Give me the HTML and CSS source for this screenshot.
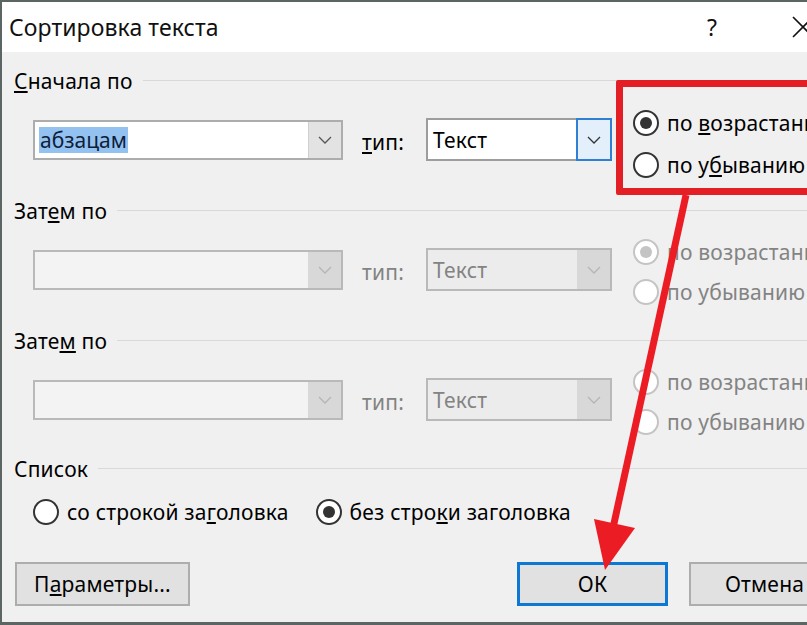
FILE: index.html
```html
<!DOCTYPE html>
<html lang="ru">
<head>
<meta charset="utf-8">
<title>Сортировка текста</title>
<link rel="stylesheet" href="styles.css">
</head>
<body>
<div class="dialog">
  <div class="titlebar">
    <span class="title">Сортировка текста</span>
    <span class="help">?</span>
    <span class="close"><svg width="30" height="24" viewBox="0 0 30 24"><path d="M1 2 L21 22 M21 2 L1 22" stroke="#111" stroke-width="1.6" fill="none"/></svg></span>
  </div>
  <div class="content">
    <div class="group first">
      <div class="ghead"><span class="glabel"><u>С</u>начала по</span><span class="gline"></span></div>
      <div class="grow">
        <div class="combo">
          <div class="field"><span class="sel">абзацам</span></div>
          <div class="drop"><svg width="14" height="8" viewBox="0 0 14 8"><path d="M1 1 L7 7 L13 1" stroke="#555" stroke-width="1.3" fill="none"/></svg></div>
        </div>
        <span class="tlabel"><u>т</u>ип:</span>
        <div class="tcombo">
          <div class="field">Текст</div>
          <div class="drop hot"><svg width="14" height="8" viewBox="0 0 14 8"><path d="M1 1 L7 7 L13 1" stroke="#333" stroke-width="1.3" fill="none"/></svg></div>
        </div>
        <div class="radios">
          <label class="radio"><span class="dot on"></span><span class="rtext">по <u>в</u>озрастанию</span></label>
          <label class="radio"><span class="dot"></span><span class="rtext">по у<u>б</u>ыванию</span></label>
        </div>
      </div>
    </div>

    <div class="group off">
      <div class="ghead"><span class="glabel">Зат<u>е</u>м по</span><span class="gline"></span></div>
      <div class="grow">
        <div class="combo">
          <div class="field"></div>
          <div class="drop"><svg width="14" height="8" viewBox="0 0 14 8"><path d="M1 1 L7 7 L13 1" stroke="#b5b5b5" stroke-width="1.3" fill="none"/></svg></div>
        </div>
        <span class="tlabel">тип:</span>
        <div class="tcombo">
          <div class="field">Текст</div>
          <div class="drop"><svg width="14" height="8" viewBox="0 0 14 8"><path d="M1 1 L7 7 L13 1" stroke="#b5b5b5" stroke-width="1.3" fill="none"/></svg></div>
        </div>
        <div class="radios">
          <label class="radio"><span class="dot on"></span><span class="rtext">по возрастанию</span></label>
          <label class="radio"><span class="dot"></span><span class="rtext">по убыванию</span></label>
        </div>
      </div>
    </div>

    <div class="group off">
      <div class="ghead"><span class="glabel">Зате<u>м</u> по</span><span class="gline"></span></div>
      <div class="grow">
        <div class="combo">
          <div class="field"></div>
          <div class="drop"><svg width="14" height="8" viewBox="0 0 14 8"><path d="M1 1 L7 7 L13 1" stroke="#b5b5b5" stroke-width="1.3" fill="none"/></svg></div>
        </div>
        <span class="tlabel">тип:</span>
        <div class="tcombo">
          <div class="field">Текст</div>
          <div class="drop"><svg width="14" height="8" viewBox="0 0 14 8"><path d="M1 1 L7 7 L13 1" stroke="#b5b5b5" stroke-width="1.3" fill="none"/></svg></div>
        </div>
        <div class="radios">
          <label class="radio"><span class="dot"></span><span class="rtext">по возрастанию</span></label>
          <label class="radio"><span class="dot"></span><span class="rtext">по убыванию</span></label>
        </div>
      </div>
    </div>

    <div class="group list">
      <div class="ghead"><span class="glabel">Список</span><span class="gline"></span></div>
      <div class="lrow">
        <label class="radio"><span class="dot"></span><span class="rtext">со строкой за<u>г</u>оловка</span></label>
        <label class="radio second"><span class="dot on"></span><span class="rtext">без стро<u>к</u>и заголовка</span></label>
      </div>
    </div>

    <div class="buttons">
      <button class="btn params">П<u>а</u>раметры...</button>
      <button class="btn ok">ОК</button>
      <button class="btn cancel">Отмена</button>
    </div>
  </div>
</div>

<div class="highlight"></div>
<svg class="arrow" width="807" height="625" viewBox="0 0 807 625">
  <line x1="686" y1="195" x2="613" y2="528" stroke="#ec1c24" stroke-width="7"/>
  <polygon points="594,519 635,528 605,570" fill="#ec1c24"/>
</svg>
</body>
</html>
```
FILE: styles.css
```css
html, body {
  margin: 0;
  padding: 0;
}
body {
  width: 807px;
  height: 625px;
  overflow: hidden;
  position: relative;
  background: #5b6664;
  font-family: "Noto Sans", "Open Sans", sans-serif;
  font-size: 21px;
  letter-spacing: 0.2px;
  color: #000;
}
.dialog {
  width: 880px;
  height: 620px;
  margin-top: 2px;
  margin-left: 2px;
  background: #f0f0f0;
  display: flex;
  flex-direction: column;
}
.titlebar {
  height: 50px;
  flex: none;
  background: #fff;
  display: flex;
  align-items: center;
}
.title {
  font-size: 23px;
  letter-spacing: 0.1px;
  margin-left: 7px;
  color: #111;
}
.help {
  margin-left: auto;
  font-size: 23px;
  width: 20px;
  text-align: center;
  color: #111;
}
.close {
  margin-left: 70px;
  width: 90px;
  display: flex;
  align-items: center;
}
.content {
  padding-left: 12px;
  padding-top: 15px;
  display: flex;
  flex-direction: column;
}
.ghead {
  height: 28px;
  display: flex;
  align-items: center;
}
.glabel {
  line-height: 28px;
  margin-right: 10px;
  white-space: nowrap;
}
.gline {
  flex: 1;
  height: 1px;
  background: #d9d9d9;
  margin-top: -2px;
}
.group + .group {
  margin-top: 15px;
}
.group.first + .group {
  margin-top: 11px;
}
.group.list {
  margin-top: 13px;
}
.grow {
  display: flex;
  align-items: flex-start;
  margin-top: 7px;
  height: 80px;
}
.first .grow {
  height: 84px;
}
.combo {
  margin-left: 19px;
  margin-top: 18px;
  width: 310px;
  height: 40px;
  box-sizing: border-box;
  border: 2px solid #adadad;
  background: #fff;
  display: flex;
  flex: none;
}
.combo .field {
  flex: 1;
  display: flex;
  align-items: center;
  padding-left: 4px;
}
.sel {
  background: #93c2f0;
  color: #0f1d3a;
  line-height: 26px;
  padding: 0 1px;
  letter-spacing: 0;
}
.drop {
  width: 32px;
  flex: none;
  background: #e3e3e3;
  border-left: 1px solid #cfcfcf;
  display: flex;
  align-items: center;
  justify-content: center;
}
.tlabel {
  margin-left: 19px;
  width: 64px;
  margin-top: 26px;
  line-height: 28px;
  flex: none;
}
.tcombo {
  margin-top: 16px;
  width: 186px;
  height: 43px;
  box-sizing: border-box;
  border: 2px solid #9d9d9d;
  background: #fff;
  display: flex;
  flex: none;
}
.tcombo .field {
  flex: 1;
  display: flex;
  align-items: center;
  padding-left: 5px;
}
.tcombo .drop.hot {
  background: #e3effb;
  border: 2px solid #2f7fd4;
  margin: -2px -2px -2px 0;
  width: 32px;
}
.radios {
  margin-left: 21px;
  display: flex;
  flex-direction: column;
}
.radio {
  height: 40px;
  display: flex;
  align-items: center;
  white-space: nowrap;
}
.first .radio {
  height: 42px;
}
.dot {
  width: 26px;
  height: 26px;
  box-sizing: border-box;
  border: 2px solid #333;
  border-radius: 50%;
  background: #fff;
  margin-right: 8px;
  display: flex;
  align-items: center;
  justify-content: center;
  flex: none;
}
.dot.on::after {
  content: "";
  width: 12px;
  height: 12px;
  border-radius: 50%;
  background: #333;
}
.off {
  color: #838383;
}
.off .glabel {
  color: #000;
}
.off .combo {
  background: #f3f3f3;
  border-color: #b9b9b9;
}
.off .drop {
  background: #d8d8d8;
  border-left-color: #d8d8d8;
}
.off .tcombo {
  background: #ececec;
  border-color: #b9b9b9;
}
.off .dot {
  border-color: #c4c4c4;
}
.off .dot.on::after {
  background: #c4c4c4;
}
.lrow {
  margin-top: 9px;
  display: flex;
  padding-left: 19px;
}
.lrow .second {
  margin-left: 27px;
}
.buttons {
  margin-top: 30px;
  display: flex;
  padding-left: 1px;
}
.btn {
  font-family: inherit;
  font-size: 21px;
  letter-spacing: 0.2px;
  color: #000;
  height: 44px;
  box-sizing: border-box;
  background: #e1e1e1;
  border: 2px solid #adadad;
  padding: 0;
  flex: none;
}
.params {
  width: 175px;
}
.ok {
  width: 151px;
  margin-left: 327px;
  border: 3px solid #0c78d4;
}
.cancel {
  width: 151px;
  margin-left: 21px;
}
.highlight {
  position: absolute;
  left: 616px;
  top: 80px;
  width: 220px;
  height: 115px;
  box-sizing: border-box;
  border: 7px solid #e31e24;
  border-radius: 2px;
}
.arrow {
  position: absolute;
  left: 0;
  top: 0;
  pointer-events: none;
}
```
